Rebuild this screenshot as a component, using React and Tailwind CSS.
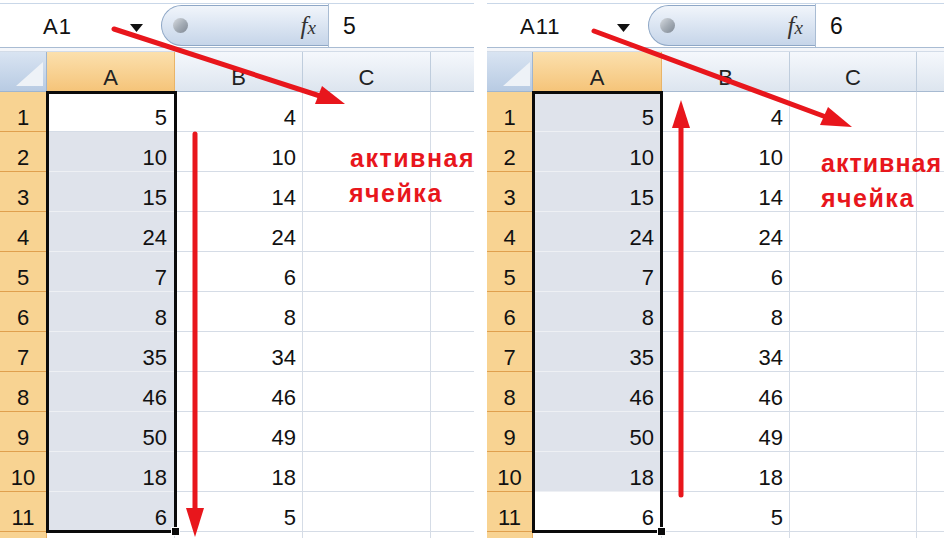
import React from "react";

const colA = [5, 10, 15, 24, 7, 8, 35, 46, 50, 18, 6];
const colB = [4, 10, 14, 24, 6, 8, 34, 46, 49, 18, 5];

const font = { fontFamily: '"Liberation Sans", Arial, sans-serif' };

function FormulaBar({ name, value, namePad }) {
  return (
    <div className="h-[48px] pt-[3px] bg-white">
      <div className="h-[45px] flex border-t border-b border-t-[#c9d7e8] border-b-[#a9bcd3]">
        <div className="w-[161px] shrink-0 flex items-center relative">
          <span className={`${namePad} text-[22px] text-[#111] tracking-[1px] leading-none pt-[2px]`}>{name}</span>
          {/* dropdown arrow */}
          <svg className="absolute left-[130px] top-[20px]" width="13" height="8" viewBox="0 0 13 8">
            <polygon points="0,0 13,0 6.5,8" fill="#111" />
          </svg>
        </div>
        <div className="w-[167px] shrink-0 my-[1px] rounded-l-full border border-r-0 border-[#8ea7c6] bg-gradient-to-b from-[#f1f5fb] via-[#dbe5f2] to-[#c6d5e9] flex items-center justify-between pl-[11px] pr-[12px]">
          <div className="w-[15px] h-[15px] rounded-full bg-gradient-to-br from-[#d9dde2] via-[#a5adb6] to-[#7f8894]" />
          <span className="text-[25px] italic text-[#333] leading-none" style={{ fontFamily: '"Liberation Serif", "Times New Roman", serif' }}>
            f<span className="text-[19px]">x</span>
          </span>
        </div>
        <div className="flex-1 border-l border-[#a9bcd3] flex items-center pl-[14px]">
          <span className="text-[23px] text-[#111] leading-none pt-[2px]">{value}</span>
        </div>
      </div>
    </div>
  );
}

function Panel({ name, value, namePad, cols, isShaded, selLeft }) {
  const rows = [...colA.map((a, i) => ({ a, b: colB[i] })), { a: "", b: "" }];
  return (
    <div className="h-full flex flex-col overflow-hidden" style={font}>
      <FormulaBar name={name} value={value} namePad={namePad} />
      <div className="h-[7px] bg-[#f4f6fa]">
        <div className="mt-[3px] border-t border-[#d3dce8]" />
      </div>
      {/* column headers */}
      <div className="flex h-[40px] shrink-0 text-[22px] text-[#222]">
        <div className={`${cols[0]} shrink-0 relative bg-gradient-to-b from-[#d9e4f2] to-[#b8cbe3] border-r border-b border-[#9fb5cf]`}>
          <svg className="absolute left-[16px] top-[10px]" width="27" height="24" viewBox="0 0 27 24">
            <polygon points="27,0 27,24 0,24" fill="#eef2f7" />
          </svg>
        </div>
        <div className={`${cols[1]} shrink-0 flex items-center justify-center pt-[11px] bg-gradient-to-b from-[#fbe0ad] to-[#f5c479] border-r border-b border-r-[#e9b468] border-b-[#f0a548]`}>A</div>
        <div className={`${cols[2]} shrink-0 flex items-center justify-center pt-[11px] bg-gradient-to-b from-[#f5f8fc] to-[#dde5ef] border-r border-b border-r-[#bfcddd] border-b-[#a7bad1]`}>B</div>
        <div className={`${cols[3]} shrink-0 flex items-center justify-center pt-[11px] bg-gradient-to-b from-[#f5f8fc] to-[#dde5ef] border-r border-b border-r-[#bfcddd] border-b-[#a7bad1]`}>C</div>
        <div className="flex-1 bg-gradient-to-b from-[#f5f8fc] to-[#dde5ef] border-b border-[#a7bad1]" />
      </div>
      {/* rows */}
      <div className="relative flex-1 text-[22px] text-[#111]">
        {rows.map((r, i) => {
          const shaded = isShaded(i);
          return (
            <div key={i} className="flex h-[40px]">
              <div className={`${cols[0]} shrink-0 flex items-center justify-center pt-[11px] bg-[#f8d392] border-r border-b border-r-[#e7ad5f] border-b-[#e0a04e]`}>
                {i < 11 ? i + 1 : ""}
              </div>
              <div className={`${cols[1]} shrink-0 flex items-center justify-end pr-[7px] pt-[11px] border-r border-b ${shaded ? "bg-[#dfe3eb] border-[#eef0f4]" : "bg-white border-[#d5dce6]"}`}>
                {r.a}
              </div>
              <div className={`${cols[2]} shrink-0 flex items-center justify-end pr-[6px] pt-[11px] bg-white border-r border-b border-[#d5dce6]`}>
                {r.b}
              </div>
              <div className={`${cols[3]} shrink-0 bg-white border-r border-b border-[#d5dce6]`} />
              <div className="flex-1 bg-white border-b border-[#d5dce6]" />
            </div>
          );
        })}
        {/* selection frame */}
        <div className={`absolute ${selLeft} top-[-1px] w-[131px] h-[442px] border-[3px] border-[#0a0a0a]`}>
          <div className="absolute right-[-6px] bottom-[-6px] w-[9px] h-[9px] bg-[#0a0a0a] border border-white" />
        </div>
      </div>
    </div>
  );
}

export default function App() {
  return (
    <div className="relative w-[944px] h-[538px] bg-white overflow-hidden flex">
      <div className="w-[474px] shrink-0 h-full">
        <Panel
          name="A1"
          value="5"
          namePad="pl-[43px]"
          cols={["w-[47px]", "w-[128px]", "w-[128px]", "w-[128px]"]}
          isShaded={(i) => i >= 1 && i <= 10}
          selLeft="left-[46px]"
        />
      </div>
      <div className="w-[13px] shrink-0" />
      <div className="flex-1 h-full">
        <Panel
          name="A11"
          value="6"
          namePad="pl-[33px]"
          cols={["w-[46px]", "w-[129px]", "w-[128px]", "w-[127px]"]}
          isShaded={(i) => i <= 9}
          selLeft="left-[45px]"
        />
      </div>

      {/* red annotation arrows */}
      <svg className="absolute inset-0 pointer-events-none" width="944" height="538" viewBox="0 0 944 538">
        <g stroke="#e8161c" strokeWidth="5" strokeLinecap="round" fill="none">
          <line x1="114" y1="29" x2="320" y2="96" />
          <line x1="195" y1="134" x2="195" y2="512" />
          <line x1="594" y1="31" x2="826" y2="117" />
          <line x1="681" y1="495" x2="681" y2="124" />
        </g>
        <g fill="#e8161c">
          <polygon points="345,104 315,104 322,86" />
          <polygon points="186,508 204,508 195,537" />
          <polygon points="852,127 820,125 828,107" />
          <polygon points="672,128 690,128 681,100" />
        </g>
      </svg>

      {/* red labels */}
      <div className="absolute left-[350px] top-[146px] text-[25px] leading-none font-bold text-[#e8161c] tracking-[1.5px]" style={font}>
        активная
      </div>
      <div className="absolute left-[349px] top-[181px] text-[25px] leading-none font-bold text-[#e8161c] tracking-[1.5px]" style={font}>
        ячейка
      </div>
      <div className="absolute left-[821px] top-[151px] text-[25px] leading-none font-bold text-[#e8161c] tracking-[1px] whitespace-nowrap" style={font}>
        активная
      </div>
      <div className="absolute left-[821px] top-[186px] text-[25px] leading-none font-bold text-[#e8161c] tracking-[1.5px]" style={font}>
        ячейка
      </div>
    </div>
  );
}
